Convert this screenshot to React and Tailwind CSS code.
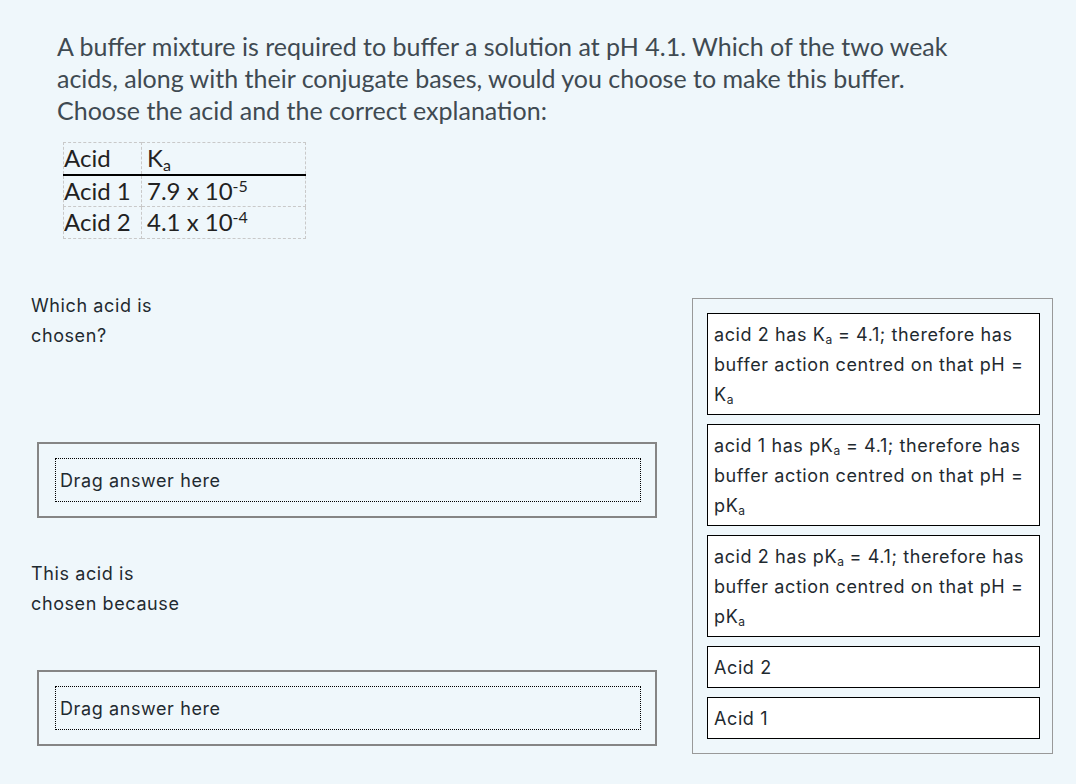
import React from "react";

const headFont = { fontFamily: "Lato, 'Open Sans', sans-serif" };

function Ka({ p }) {
  return (
    <span>
      {p ? "p" : ""}K<sub className="text-[12px] tracking-normal">a</sub>
    </span>
  );
}

function DropZone() {
  return (
    <div className="w-[620px] h-[76px] border-2 border-[#858585] pl-[16px] pt-[14px]">
      <div className="w-[586px] h-[44px] border border-dotted border-black flex items-center pl-[4px] text-[18px] tracking-[0.6px] text-[#1f2a30]">
        Drag answer here
      </div>
    </div>
  );
}

function Option({ children }) {
  return (
    <div className="w-[333px] border border-black bg-white pl-[6px] pr-[4px] pt-[6px] pb-[4px] text-[18px] tracking-[0.6px] leading-[30px] text-[#1f2a30]">
      {children}
    </div>
  );
}

const cell = "border border-dashed border-[#c9c9c9] h-[32px] align-top";
const headCell =
  "border border-dashed border-[#c9c9c9] border-b-2 border-b-black [border-bottom-style:solid] h-[32px] align-top";

export default function App() {
  return (
    <div
      className="w-[1076px] h-[784px] bg-[#eff7fb] overflow-hidden"
      style={{ fontFamily: "Inter, 'Noto Sans', sans-serif" }}
    >
      <div className="pt-[30px] pl-[57px]" style={headFont}>
        <p className="text-[25px] leading-[32px] text-[#3f4a52]">
          A buffer mixture is required to buffer a solution at pH 4.1. Which of the two weak
          <br />
          acids, along with their conjugate bases, would you choose to make this buffer.
          <br />
          Choose the acid and the correct explanation:
        </p>
        <table className="mt-[16px] ml-[6px] border-collapse text-[24px] leading-[30px] text-[#222]">
          <tbody>
            <tr>
              <td className={headCell + " w-[78px] p-0"}>Acid</td>
              <td className={headCell + " w-[164px] pl-[5px]"}>
                K<sub className="text-[16px]">a</sub>
              </td>
            </tr>
            <tr>
              <td className={cell + " p-0"}>Acid 1</td>
              <td className={cell + " pl-[5px]"}>
                7.9 x 10<sup className="text-[16px]">-5</sup>
              </td>
            </tr>
            <tr>
              <td className={cell + " p-0"}>Acid 2</td>
              <td className={cell + " pl-[5px]"}>
                4.1 x 10<sup className="text-[16px]">-4</sup>
              </td>
            </tr>
          </tbody>
        </table>
      </div>

      <div className="flex items-start pl-[31px] mt-[52px]">
        <div className="w-[661px] flex flex-col">
          <div className="text-[18px] tracking-[0.6px] leading-[30px] text-[#1f2a30]">
            Which acid is
            <br />
            chosen?
          </div>
          <div className="mt-[91px] ml-[6px]">
            <DropZone />
          </div>
          <div className="mt-[41px] text-[18px] tracking-[0.6px] leading-[30px] text-[#1f2a30]">
            This acid is
            <br />
            chosen because
          </div>
          <div className="mt-[51px] ml-[6px]">
            <DropZone />
          </div>
        </div>
        <div className="mt-[7px] w-[361px] border border-[#999] px-[14px] pt-[14px] pb-[14px] flex flex-col gap-[9px]">
          <Option>
            acid 2 has <Ka /> = 4.1; therefore has buffer action centred on that pH = <Ka />
          </Option>
          <Option>
            acid 1 has <Ka p /> = 4.1; therefore has buffer action centred on that pH = <Ka p />
          </Option>
          <Option>
            acid 2 has <Ka p /> = 4.1; therefore has buffer action centred on that pH = <Ka p />
          </Option>
          <Option>Acid 2</Option>
          <Option>Acid 1</Option>
        </div>
      </div>
    </div>
  );
}
